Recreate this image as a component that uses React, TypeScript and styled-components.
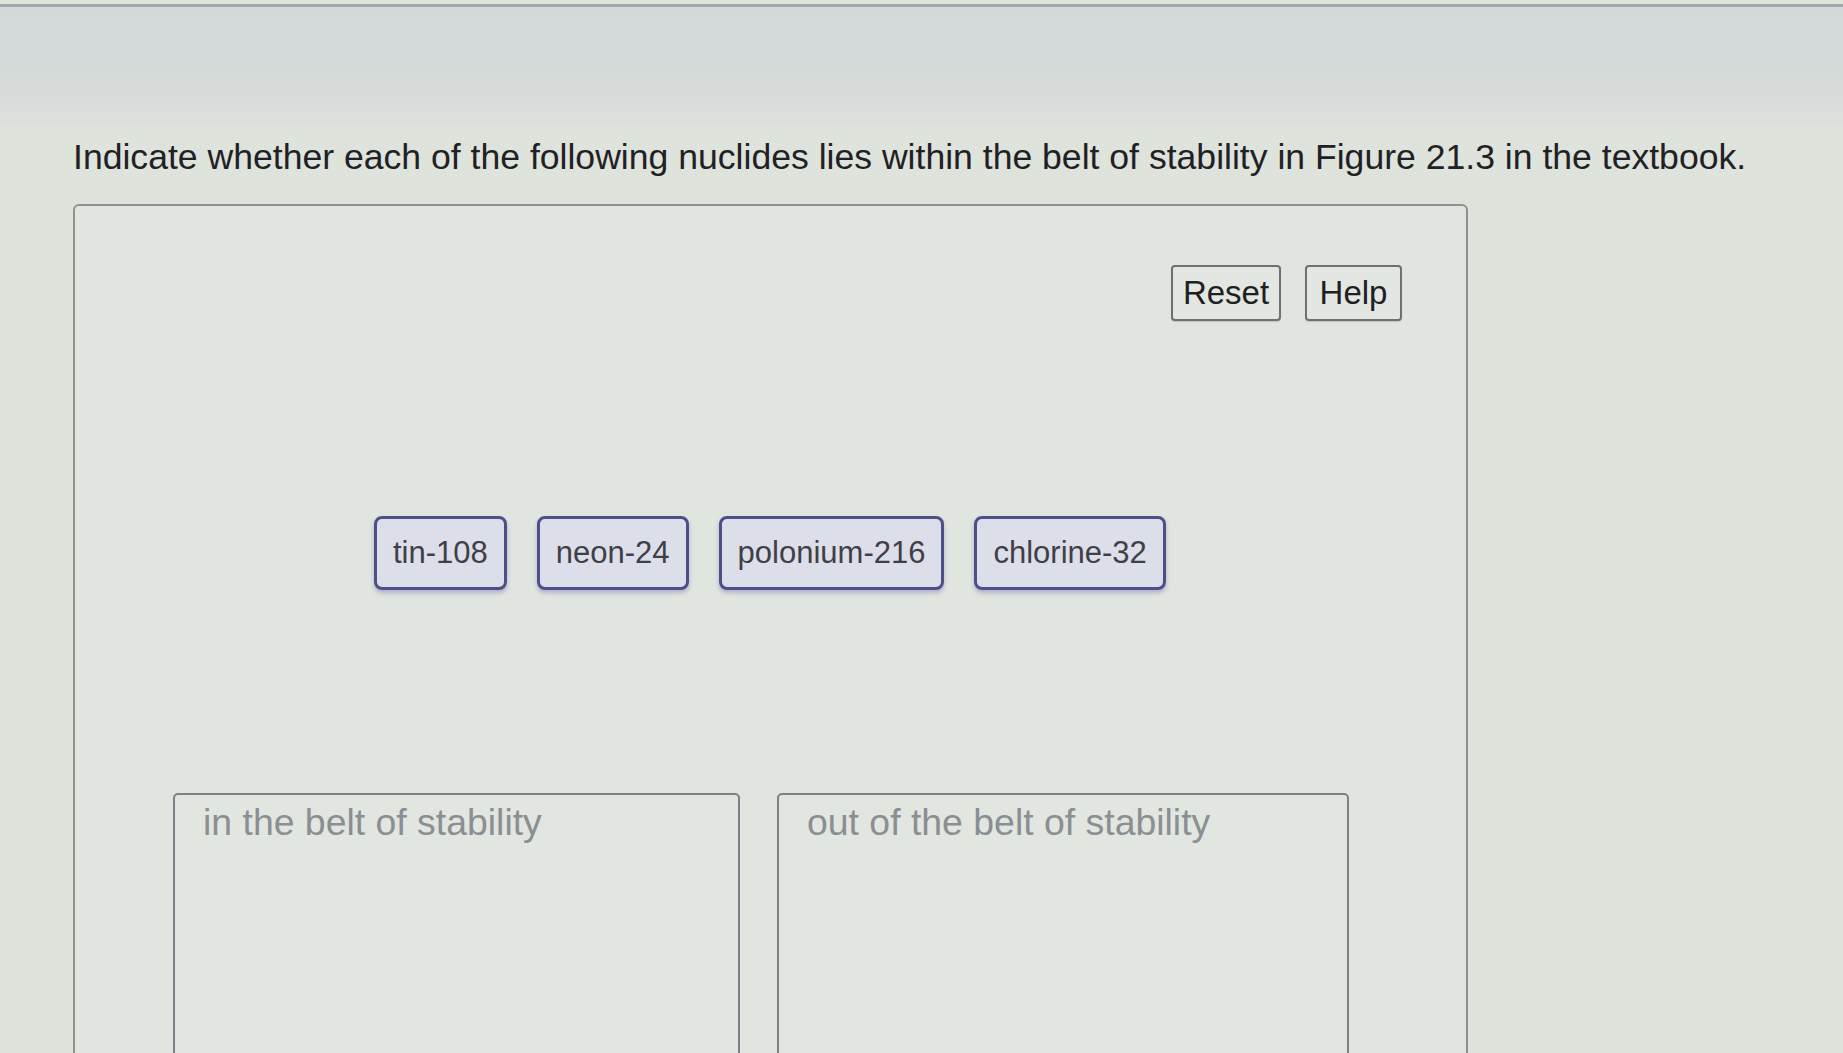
import React from "react";
import styled, { createGlobalStyle } from "styled-components";

const Global = createGlobalStyle`
  html, body {
    margin: 0;
    padding: 0;
    background: #dee3dc;
    font-family: "Liberation Sans", Arial, sans-serif;
    overflow: hidden;
  }
`;

const Page = styled.div`
  width: 1843px;
  height: 1053px;
  overflow: hidden;
  background: #dee3dc;
  display: flex;
  flex-direction: column;
`;

const TopBand = styled.div`
  height: 118px;
  flex: none;
  border-top: 3px solid #a3a7ac;
  margin-top: 4px;
  background: linear-gradient(180deg, #d3d8d9 0%, #d6dbda 70%, #dce1dc 100%);
`;

const Content = styled.div`
  padding: 0 0 0 73px;
  display: flex;
  flex-direction: column;
`;

const Question = styled.p`
  margin: 12px 0 0 0;
  font-size: 35.6px;
  line-height: 40px;
  color: #1f2124;
  white-space: nowrap;
`;

const Panel = styled.div`
  margin-top: 27px;
  width: 1395px;
  height: 900px;
  box-sizing: border-box;
  border: 2px solid #8d9194;
  border-radius: 6px;
  background: #e0e5df;
  display: flex;
  flex-direction: column;
`;

const ButtonRow = styled.div`
  display: flex;
  justify-content: flex-end;
  gap: 24px;
  padding: 59px 64px 0 0;
`;

const ToolButton = styled.button<{ $w: number }>`
  width: ${(p) => p.$w}px;
  height: 56px;
  box-sizing: border-box;
  border: 2px solid #6d7173;
  border-radius: 4px;
  background: #e2e7e2;
  color: #1e2022;
  font-family: "Liberation Sans", Arial, sans-serif;
  font-size: 33px;
  padding: 0;
  box-shadow: 0 1px 1px rgba(0, 0, 0, 0.15);
`;

const ChipRow = styled.div`
  display: flex;
  gap: 30px;
  padding-left: 299px;
  margin-top: 195px;
`;

const Chip = styled.div`
  height: 74px;
  box-sizing: border-box;
  padding: 0 16px;
  display: flex;
  align-items: center;
  border: 3px solid #4e4f88;
  border-radius: 8px;
  background: #dcdee9;
  color: #3f4046;
  font-size: 31px;
  box-shadow: 0 3px 4px rgba(90, 80, 170, 0.35);
`;

const ZoneRow = styled.div`
  display: flex;
  gap: 37px;
  padding-left: 98px;
  margin-top: 203px;
`;

const Zone = styled.div<{ $w: number }>`
  width: ${(p) => p.$w}px;
  height: 400px;
  box-sizing: border-box;
  border: 2px solid #7d8085;
  border-radius: 5px;
  background: #e1e6e0;
  padding: 6px 0 0 28px;
`;

const ZoneLabel = styled.div`
  font-size: 37.4px;
  color: #8b8e92;
`;

const chips = ["tin-108", "neon-24", "polonium-216", "chlorine-32"];

export default function App() {
  return (
    <Page>
      <Global />
      <TopBand />
      <Content>
        <Question>
          Indicate whether each of the following nuclides lies within the belt of stability in Figure 21.3 in the textbook.
        </Question>
        <Panel>
          <ButtonRow>
            <ToolButton $w={110}>Reset</ToolButton>
            <ToolButton $w={97}>Help</ToolButton>
          </ButtonRow>
          <ChipRow>
            {chips.map((c) => (
              <Chip key={c}>{c}</Chip>
            ))}
          </ChipRow>
          <ZoneRow>
            <Zone $w={567}>
              <ZoneLabel>in the belt of stability</ZoneLabel>
            </Zone>
            <Zone $w={572}>
              <ZoneLabel>out of the belt of stability</ZoneLabel>
            </Zone>
          </ZoneRow>
        </Panel>
      </Content>
    </Page>
  );
}
